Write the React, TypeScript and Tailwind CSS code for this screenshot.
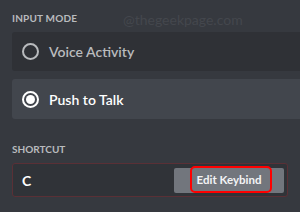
export default function App() {
  return (
    <div
      className="w-[300px] h-[212px] overflow-hidden bg-[#36393f] relative"
      style={{ fontFamily: 'Lato, "Noto Sans", sans-serif' }}
    >
      {/* Watermark */}
      <div className="absolute left-[123px] top-[9px] text-[14px] text-[#44474d]">@thegeekpage.com</div>

      <div className="pl-[12px] pt-[12px]">
        <div className="text-[10px] font-bold tracking-[0.2px] text-[#b9bbbe] leading-[12px] h-[20px]">
          INPUT MODE
        </div>

        {/* Voice Activity */}
        <div className="h-[39px] bg-[#2f3136] rounded-l-[3px] flex items-center pl-[10px]">
          <div className="w-[17px] h-[17px] rounded-full border-2 border-[#b9bbbe]" />
          <span className="ml-[10px] text-[14px] text-[#b9bbbe] font-semibold">Voice Activity</span>
        </div>

        {/* Push to Talk */}
        <div className="mt-[8px] h-[40px] bg-[#42464d] rounded-l-[3px] flex items-center pl-[10px]">
          <div className="w-[17px] h-[17px] rounded-full border-2 border-white flex items-center justify-center">
            <div className="w-[9px] h-[9px] rounded-full bg-white" />
          </div>
          <span className="ml-[10px] text-[14px] text-white font-semibold">Push to Talk</span>
        </div>

        <div className="mt-[24px] text-[10px] font-bold text-[#b9bbbe] leading-[12px] h-[20px]">
          SHORTCUT
        </div>

        {/* Shortcut box */}
        <div className="w-[276px] h-[34px] border border-[#5a3036] rounded-[3px] bg-[#303338] flex items-center justify-between pl-[9px] pr-[3px]">
          <span className="text-[14px] font-bold text-white">C</span>
          <div className="w-[110px] h-[25px] bg-[#72767d] rounded-[2px] relative flex items-center justify-center">
            <div className="absolute left-[16px] top-[-2px] w-[82px] h-[27px] border-2 border-[#ff0000] rounded-[5px]" />
            <span className="text-[11.5px] font-bold text-[#f2f3f5]">Edit Keybind</span>
          </div>
        </div>
      </div>
    </div>
  );
}
